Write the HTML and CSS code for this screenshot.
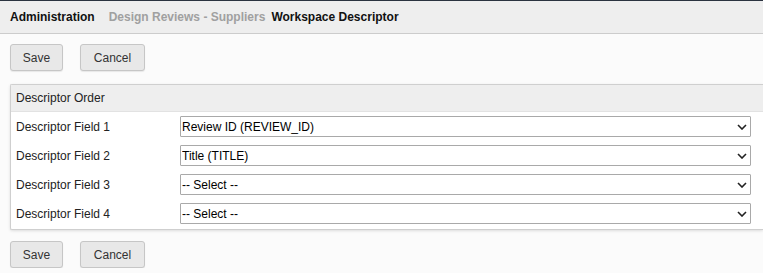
FILE: index.html
```html
<!DOCTYPE html>
<html lang="en">
<head>
    <meta charset="UTF-8">
    <title>Workspace Descriptor</title>
    <link rel="stylesheet" href="styles.css">
</head>
<body>
    <div class="crumbs">
        <a class="crumb">Administration</a>
        <a class="crumb muted">Design Reviews - Suppliers</a>
        <span class="crumb current">Workspace Descriptor</span>
    </div>

    <div class="actions">
        <button class="btn">Save</button>
        <button class="btn">Cancel</button>
    </div>

    <div class="panel">
        <div class="panel-head">Descriptor Order</div>
        <div class="panel-body">
            <label>Descriptor Field 1</label>
            <div class="select-wrap">
                <select><option>Review ID (REVIEW_ID)</option></select>
                <svg class="chev" width="10" height="6" viewBox="0 0 10 6"><path d="M1 1l4 4 4-4" fill="none" stroke="#222" stroke-width="1.6"/></svg>
            </div>

            <label>Descriptor Field 2</label>
            <div class="select-wrap">
                <select><option>Title (TITLE)</option></select>
                <svg class="chev" width="10" height="6" viewBox="0 0 10 6"><path d="M1 1l4 4 4-4" fill="none" stroke="#222" stroke-width="1.6"/></svg>
            </div>

            <label>Descriptor Field 3</label>
            <div class="select-wrap">
                <select><option>-- Select --</option></select>
                <svg class="chev" width="10" height="6" viewBox="0 0 10 6"><path d="M1 1l4 4 4-4" fill="none" stroke="#222" stroke-width="1.6"/></svg>
            </div>

            <label>Descriptor Field 4</label>
            <div class="select-wrap">
                <select><option>-- Select --</option></select>
                <svg class="chev" width="10" height="6" viewBox="0 0 10 6"><path d="M1 1l4 4 4-4" fill="none" stroke="#222" stroke-width="1.6"/></svg>
            </div>
        </div>
    </div>

    <div class="actions bottom">
        <button class="btn">Save</button>
        <button class="btn">Cancel</button>
    </div>
</body>
</html>
```

FILE: styles.css
```css
* {
    margin: 0;
    padding: 0;
    box-sizing: border-box;
}

body {
    font-family: 'Liberation Sans', Arial, sans-serif;
    font-size: 12px;
    color: #222;
    background: #fbfbfb;
    border-top: 1px solid #2b3340;
    overflow: hidden;
}

.crumbs {
    display: flex;
    align-items: center;
    height: 33px;
    padding: 0 10px;
    background: #eeeeee;
    border-bottom: 1px solid #cccccc;
    font-weight: bold;
}

.crumb {
    color: #111;
    margin-right: 14px;
}

.crumb.muted {
    color: #a0a0a0;
    margin-right: 6px;
}

.actions {
    display: flex;
    gap: 17px;
    padding: 10px 10px 0;
}

.actions.bottom {
    padding-top: 11px;
}

.btn {
    font-family: inherit;
    font-size: 12px;
    color: #333;
    height: 27px;
    padding: 0;
    background: #e8e8e8;
    border: 1px solid #c6c6c6;
    border-radius: 3px;
    box-shadow: 0 1px 1px rgba(0, 0, 0, 0.08);
}

.btn:first-child {
    width: 53px;
}

.btn:last-child {
    width: 65px;
}

.panel {
    margin: 13px 0 0 10px;
    background: #ffffff;
    border: 1px solid #cfcfcf;
    border-right: none;
    border-radius: 2px 0 0 2px;
    box-shadow: 0 1px 3px rgba(0, 0, 0, 0.12);
}

.panel-head {
    height: 27px;
    line-height: 27px;
    padding-left: 5px;
    background: #eeeeee;
    border-bottom: 1px solid #e2e2e2;
}

.panel-body {
    display: grid;
    grid-template-columns: 164px 571px;
    row-gap: 8px;
    align-items: center;
    padding: 4px 0 5px 5px;
}

.select-wrap {
    position: relative;
}

select {
    appearance: none;
    display: block;
    width: 100%;
    height: 21px;
    padding: 0 0 0 1px;
    font-family: inherit;
    font-size: 12px;
    color: #000;
    background: #fff;
    border: 1px solid #a9a9a9;
    border-radius: 1px;
}

.chev {
    position: absolute;
    right: 4px;
    top: 8px;
    pointer-events: none;
}
```
